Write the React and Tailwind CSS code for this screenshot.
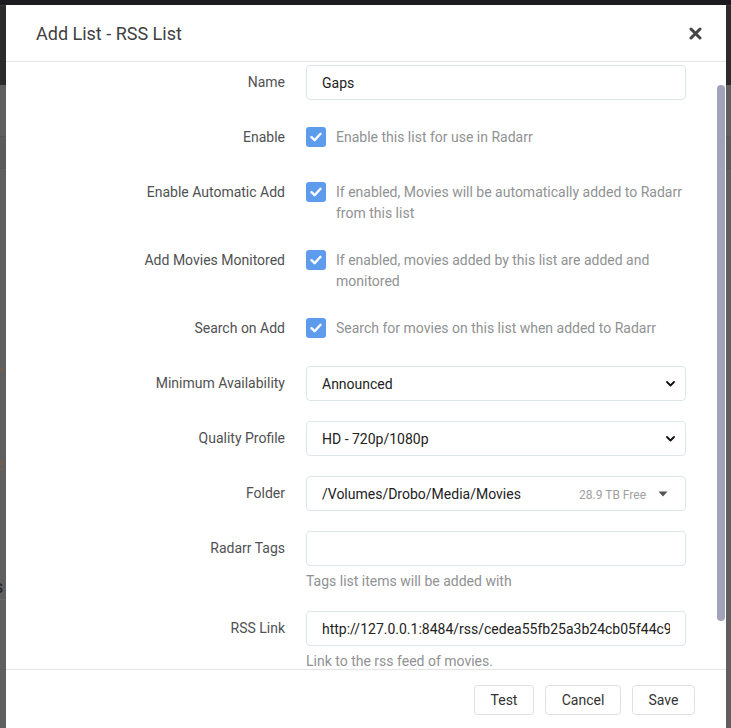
import React from "react";

function Check() {
  return (
    <div className="w-[20px] h-[20px] rounded-[3px] bg-[#5d9cec] flex items-center justify-center shrink-0 relative top-[1px]">
      <svg width="12" height="10" viewBox="0 0 12 10">
        <path d="M1.5 5.2 L4.6 8.2 L10.5 1.8" fill="none" stroke="#fff" strokeWidth="2.4" strokeLinecap="round" strokeLinejoin="round" />
      </svg>
    </div>
  );
}

function Row({ label, children }) {
  return (
    <div className="flex items-start mb-[20px]">
      <div className="w-[279px] shrink-0 text-right pt-[7px] leading-[21px] text-[14px] text-[#505152]">{label}</div>
      <div className="ml-[21px] w-[380px] shrink-0">{children}</div>
    </div>
  );
}

function CheckRow({ label, text }) {
  return (
    <Row label={label}>
      <div className="flex items-start gap-[10px] pt-[6px] min-h-[35px]">
        <Check />
        <div className="text-[14px] leading-[21px] text-[#909293] relative top-[1px]">{text}</div>
      </div>
    </Row>
  );
}

function Input({ children, className = "" }) {
  return (
    <div className={"h-[35px] rounded-[4px] border border-[#dde6e9] flex items-center pl-[15px] pr-[10px] text-[14px] text-[#222] whitespace-nowrap " + className}>
      {children}
    </div>
  );
}

function Chevron() {
  return (
    <svg width="9" height="6" viewBox="0 0 9 6" className="shrink-0">
      <path d="M1 1 L4.5 4.5 L8 1" fill="none" stroke="#111" strokeWidth="1.8" strokeLinecap="round" strokeLinejoin="round" />
    </svg>
  );
}

export default function App() {
  return (
    <div className="relative w-[731px] h-[728px] overflow-hidden font-['Roboto','Liberation_Sans',sans-serif]">
      {/* background page */}
      <div className="flex flex-col h-full">
        <div className="h-[5px] bg-[#1c1c1e]"></div>
        <div className="h-[80px] bg-[#2b2b2b] border-t border-[#3a3a3a]"></div>
        <div className="flex-1 bg-[#5f5f5f] relative">
          <div className="h-[52px] border-b border-[#565656]"></div>
          <div className="h-[32px] bg-[#5b5b5b] border-b border-[#585858]"></div>
          <span className="absolute left-[-5px] top-[270px] text-[14px] text-[#8a5a30]">L</span>
          <span className="absolute left-[-4px] top-[370px] text-[14px] text-[#8a5a30]">c</span>
          <span className="absolute left-[-6px] top-[488px] text-[18px] text-[#222]">s</span>
          <div className="absolute left-0 w-[8px] top-[514px] border-t border-[#6a6a6a]"></div>
        </div>
      </div>

      {/* modal */}
      <div className="absolute left-[6px] top-[5px] w-[720px] h-[740px] bg-white flex flex-col">
        <div className="h-[57px] shrink-0 border-b border-[#e5e5e5] flex items-center justify-between pl-[30px] pr-[24px]">
          <div className="text-[18px] text-[#3f3f3f] pt-[1px]">Add List - RSS List</div>
          <svg width="13" height="13" viewBox="0 0 13 13">
            <path d="M2 2 L11 11 M11 2 L2 11" stroke="#444" strokeWidth="3" strokeLinecap="round" />
          </svg>
        </div>

        <div className="relative h-[607px] shrink-0 overflow-hidden pt-[3px]">
          <Row label="Name">
            <Input><span className="relative top-[1px]">Gaps</span></Input>
          </Row>
          <CheckRow label="Enable" text="Enable this list for use in Radarr" />
          <CheckRow label="Enable Automatic Add" text={<>If enabled, Movies will be automatically added to Radarr<br />from this list</>} />
          <CheckRow label="Add Movies Monitored" text={<>If enabled, movies added by this list are added and<br />monitored</>} />
          <CheckRow label="Search on Add" text="Search for movies on this list when added to Radarr" />
          <Row label="Minimum Availability">
            <Input className="justify-between">
              <span className="relative top-[1px]">Announced</span>
              <Chevron />
            </Input>
          </Row>
          <Row label="Quality Profile">
            <Input className="justify-between">
              <span className="relative top-[1px]">HD - 720p/1080p</span>
              <Chevron />
            </Input>
          </Row>
          <Row label="Folder">
            <Input className="pr-[17px]">
              <span className="flex-1 relative top-[1px]">/Volumes/Drobo/Media/Movies</span>
              <span className="text-[12px] text-[#a0a0a0] mr-[12px] relative top-[1px]">28.9 TB Free</span>
              <svg width="10" height="6" viewBox="0 0 10 6">
                <path d="M0.5 0.5 L9.5 0.5 L5 5.5 Z" fill="#555" />
              </svg>
            </Input>
          </Row>
          <Row label="Radarr Tags">
            <Input></Input>
            <div className="mt-[4px] text-[14px] leading-[21px] text-[#909293] relative top-[1px]">Tags list items will be added with</div>
          </Row>
          <Row label="RSS Link">
            <Input className="pr-[15px]">
              <span className="block w-full overflow-hidden relative top-[1px]">http://127.0.0.1:8484/rss/cedea55fb25a3b24cb05f44c9d1a7e0b</span>
            </Input>
            <div className="mt-[4px] text-[14px] leading-[21px] text-[#909293] relative top-[1px]">Link to the rss feed of movies.</div>
          </Row>

          <div className="absolute left-[711px] top-[23px] w-[8px] h-[536px] rounded-full bg-[#9fa4bb]"></div>
        </div>

        <div className="border-t border-[#e5e5e5] flex justify-end gap-[11px] pt-[15px] pr-[31px]">
          <button className="w-[60px] h-[30px] rounded-[4px] border border-[#e0e0e0] text-[14px] text-[#333] bg-white">Test</button>
          <button className="w-[76px] h-[30px] rounded-[4px] border border-[#e0e0e0] text-[14px] text-[#333] bg-white">Cancel</button>
          <button className="w-[63px] h-[30px] rounded-[4px] border border-[#e0e0e0] text-[14px] text-[#333] bg-white">Save</button>
        </div>
      </div>
    </div>
  );
}
